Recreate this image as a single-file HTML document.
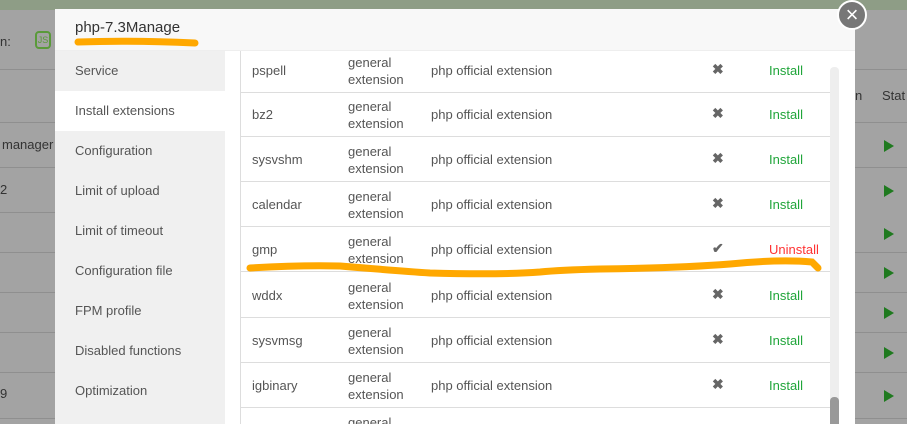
<!DOCTYPE html>
<html><head><meta charset="utf-8"><style>
*{margin:0;padding:0;box-sizing:border-box}
html,body{width:907px;height:424px;overflow:hidden}
body{position:relative;background:#a3a3a3;font-family:"Liberation Sans",sans-serif;font-size:13px;color:#555}
.top{position:absolute;left:0;top:0;width:907px;height:10px;background:#8e9d86}
.bl{position:absolute;height:1px;background:#8f8f8f}
.bgt{position:absolute;color:#333;font-size:13px}
.play{position:absolute;left:884px;width:0;height:0;border-left:10px solid #1f7a1f;border-top:6px solid transparent;border-bottom:6px solid transparent}
.modal{position:absolute;left:55px;top:9px;width:800px;height:415px;background:#fff}
.hd{height:42px;background:#f8f8f8;border-bottom:1px solid #eee;padding:10px 20px;font-size:15px;color:#333}
.side{position:absolute;left:0;top:42px;width:170px;height:373px;background:#f0f0f0}
.side div{height:40px;line-height:40px;padding-left:20px;color:#555}
.side .on{background:#fff}
.tbl{position:absolute;left:185px;top:42px;width:590px;height:373px;overflow:hidden;border-left:1px solid #ddd}
.row{position:absolute;left:0;width:590px;height:45px;border-bottom:1px solid #ddd}
.row span{position:absolute}
.n{left:11px;top:15px}.t{left:107px;top:6px;line-height:17px}.d{left:190px;top:15px}
.i{left:471px;top:13px;font-size:14px;color:#666;font-weight:bold}.a{left:528px;top:15px;color:#20a53a}
.sb{position:absolute;left:775px;top:58px;width:9px;height:357px;background:#eee;border-radius:4px}
.th{position:absolute;left:775px;top:388px;width:9px;height:27px;background:#999;border-radius:4px 4px 0 0}
.close{position:absolute;left:782px;top:-9px;width:30px;height:30px;border-radius:50%;background:#777;border:2px solid #fff;color:#fff;font-size:22px;line-height:25px;text-align:center}
</style></head><body>
<div class="top"></div>
<div class="bl" style="left:0;top:69px;width:55px"></div>
<div class="bl" style="left:0;top:122px;width:55px"></div>
<div class="bl" style="left:0;top:167px;width:55px"></div>
<div class="bl" style="left:0;top:212px;width:55px"></div>
<div class="bl" style="left:0;top:252px;width:55px"></div>
<div class="bl" style="left:0;top:292px;width:55px"></div>
<div class="bl" style="left:0;top:332px;width:55px"></div>
<div class="bl" style="left:0;top:372px;width:55px"></div>
<div class="bl" style="left:0;top:418px;width:55px"></div>
<div class="bgt" style="left:0;top:34px">n:</div>
<div style="position:absolute;left:35px;top:31px;width:16px;height:18px;border:2px solid #5a9a3a;border-radius:4px;color:#5a9a3a;font-size:9px;text-align:center;line-height:14px">JS</div>
<div class="bgt" style="left:2px;top:137px">manager</div>
<div class="bgt" style="left:0;top:182px">2</div>
<div class="bgt" style="left:0;top:386px">9</div>
<div class="bl" style="left:855px;top:69px;width:52px"></div>
<div class="bl" style="left:855px;top:122px;width:52px"></div>
<div class="bl" style="left:855px;top:167px;width:52px"></div>
<div class="bl" style="left:855px;top:252px;width:52px"></div>
<div class="bl" style="left:855px;top:292px;width:52px"></div>
<div class="bl" style="left:855px;top:332px;width:52px"></div>
<div class="bl" style="left:855px;top:372px;width:52px"></div>
<div class="bl" style="left:855px;top:418px;width:52px"></div>
<div class="bgt" style="left:855px;top:88px">n</div>
<div class="bgt" style="left:882px;top:88px">Stat</div>
<div class="play" style="top:140px"></div><div class="play" style="top:185px"></div><div class="play" style="top:228px"></div><div class="play" style="top:267px"></div><div class="play" style="top:307px"></div><div class="play" style="top:347px"></div><div class="play" style="top:390px"></div>
<div class="modal">
<div class="hd">php-7.3Manage</div>
<div class="side"><div>Service</div><div class="on">Install extensions</div><div>Configuration</div><div>Limit of upload</div><div>Limit of timeout</div><div>Configuration file</div><div>FPM profile</div><div>Disabled functions</div><div>Optimization</div></div>
<div class="tbl">
<div class="row" style="top:-3px"><span class="n">pspell</span><span class="t">general<br>extension</span><span class="d">php official extension</span><span class="i">✖</span><span class="a">Install</span></div>
<div class="row" style="top:41px"><span class="n">bz2</span><span class="t">general<br>extension</span><span class="d">php official extension</span><span class="i">✖</span><span class="a">Install</span></div>
<div class="row" style="top:86px"><span class="n">sysvshm</span><span class="t">general<br>extension</span><span class="d">php official extension</span><span class="i">✖</span><span class="a">Install</span></div>
<div class="row" style="top:131px"><span class="n">calendar</span><span class="t">general<br>extension</span><span class="d">php official extension</span><span class="i">✖</span><span class="a">Install</span></div>
<div class="row" style="top:176px"><span class="n">gmp</span><span class="t">general<br>extension</span><span class="d">php official extension</span><span class="i">✔</span><span class="a" style="color:#f33">Uninstall</span></div>
<div class="row" style="top:222px"><span class="n">wddx</span><span class="t">general<br>extension</span><span class="d">php official extension</span><span class="i">✖</span><span class="a">Install</span></div>
<div class="row" style="top:267px"><span class="n">sysvmsg</span><span class="t">general<br>extension</span><span class="d">php official extension</span><span class="i">✖</span><span class="a">Install</span></div>
<div class="row" style="top:312px"><span class="n">igbinary</span><span class="t">general<br>extension</span><span class="d">php official extension</span><span class="i">✖</span><span class="a">Install</span></div>
<div class="row" style="top:357px;height:16px;border-bottom:none;overflow:hidden"><span class="t">general</span></div>
</div>
<div class="sb"></div><div class="th"></div>
<div class="close">×</div>
</div>
<svg style="position:absolute;left:0;top:0" width="907" height="424"><g fill="none" stroke="#ffa800" stroke-linecap="round" stroke-width="7">
<path d="M78 42 Q130 40 195 43"/>
<path d="M250 268 Q300 265 340 266 Q400 271 430 273 Q500 275 540 272 Q560 270 600 269 Q680 268 730 264 Q780 259 812 262 L818 268"/>
</g></svg>
</body></html>
